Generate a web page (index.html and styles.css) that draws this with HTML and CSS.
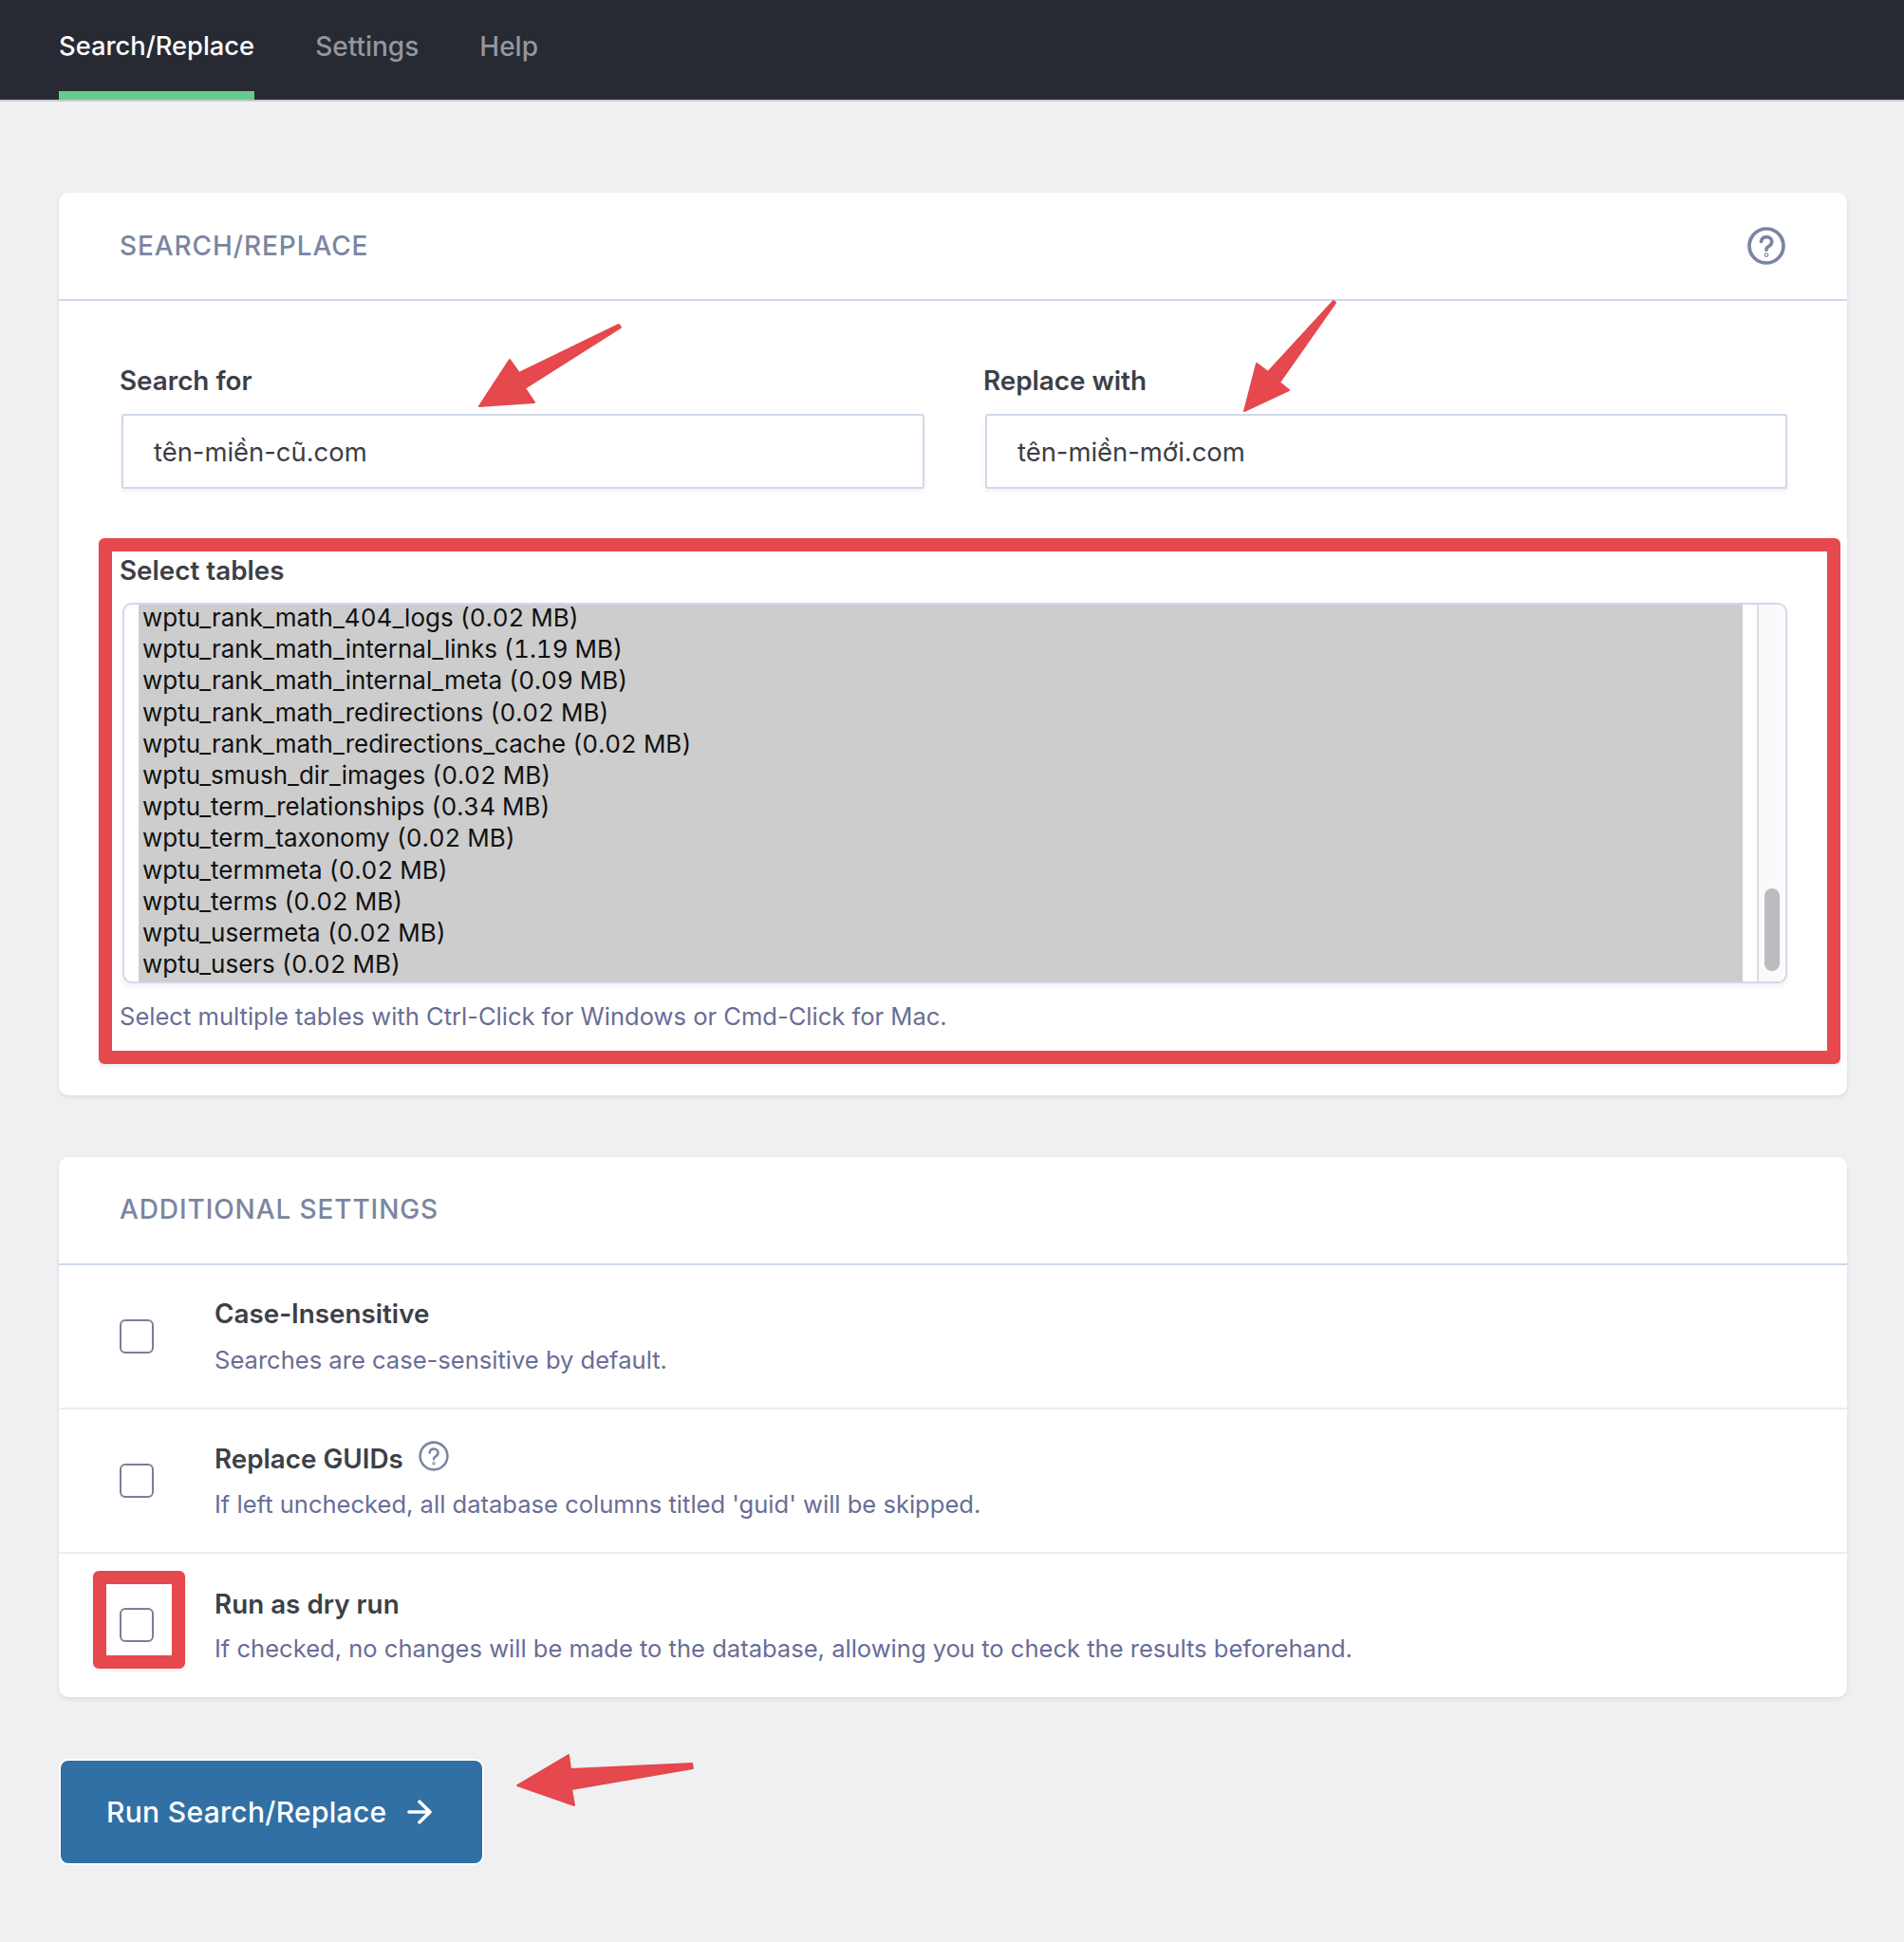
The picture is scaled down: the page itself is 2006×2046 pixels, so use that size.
FILE: index.html
```html
<!DOCTYPE html>
<html lang="vi">
<head>
<meta charset="utf-8">
<title>Search/Replace</title>
<link rel="stylesheet" href="styles.css">
</head>
<body>
<div class="page">
  <nav class="nav">
    <a class="tab active">Search/Replace</a>
    <a class="tab">Settings</a>
    <a class="tab">Help</a>
  </nav>
  <main class="main">
    <section class="card">
      <header class="card-head">
        <h2>SEARCH/REPLACE</h2>
        <svg class="help-lg" viewBox="0 0 40 40" fill="none"><circle cx="20" cy="20" r="18"/><path d="M14.500 15.500c.6-3 2.800-4.800 5.600-4.800 3.400 0 5.600 2.200 5.600 5 0 2.400-1.300 3.700-3.200 4.800-1.700 1-2.500 2-2.500 3.700"/><circle cx="20" cy="29.600" r=".6"/></svg>
      </header>
      <div class="card-body">
        <div class="fields">
          <div class="field">
            <label class="label">Search for</label>
            <div class="input">tên-miền-cũ.com</div>
          </div>
          <div class="field">
            <label class="label">Replace with</label>
            <div class="input">tên-miền-mới.com</div>
          </div>
        </div>
        <label class="label tables-label">Select tables</label>
        <div class="listbox">
          <div class="options">
            <div>wptu_rank_math_404_logs (0.02 MB)</div>
            <div>wptu_rank_math_internal_links (1.19 MB)</div>
            <div>wptu_rank_math_internal_meta (0.09 MB)</div>
            <div>wptu_rank_math_redirections (0.02 MB)</div>
            <div>wptu_rank_math_redirections_cache (0.02 MB)</div>
            <div>wptu_smush_dir_images (0.02 MB)</div>
            <div>wptu_term_relationships (0.34 MB)</div>
            <div>wptu_term_taxonomy (0.02 MB)</div>
            <div>wptu_termmeta (0.02 MB)</div>
            <div>wptu_terms (0.02 MB)</div>
            <div>wptu_usermeta (0.02 MB)</div>
            <div>wptu_users (0.02 MB)</div>
          </div>
          <div class="scroll-gap"></div>
          <div class="scrollbar"><div class="thumb"></div></div>
        </div>
        <p class="hint">Select multiple tables with Ctrl-Click for Windows or Cmd-Click for Mac.</p>
      </div>
    </section>

    <section class="card second">
      <header class="card-head">
        <h2>ADDITIONAL SETTINGS</h2>
      </header>
      <div class="row">
        <span class="check"></span>
        <div class="row-text">
          <div class="row-title">Case-Insensitive</div>
          <div class="row-desc">Searches are case-sensitive by default.</div>
        </div>
      </div>
      <div class="row low">
        <span class="check"></span>
        <div class="row-text">
          <div class="row-title">Replace GUIDs
            <svg class="help-sm" viewBox="0 0 40 40" fill="none"><circle cx="20" cy="20" r="18"/><path d="M14.500 15.500c.6-3 2.800-4.800 5.600-4.800 3.400 0 5.600 2.200 5.600 5 0 2.400-1.300 3.700-3.200 4.800-1.700 1-2.500 2-2.500 3.700"/><circle cx="20" cy="29.600" r=".6"/></svg>
          </div>
          <div class="row-desc">If left unchecked, all database columns titled 'guid' will be skipped.</div>
        </div>
      </div>
      <div class="row low last">
        <span class="check"></span>
        <div class="row-text">
          <div class="row-title">Run as dry run</div>
          <div class="row-desc">If checked, no changes will be made to the database, allowing you to check the results beforehand.</div>
        </div>
      </div>
    </section>

    <button class="run" type="button">Run Search/Replace
      <svg class="run-arrow" viewBox="0 0 26 26" fill="none"><path d="M2 13H24M13 2.200L24 13 13 23.800"/></svg>
    </button>
  </main>

  <div class="mark mark-tables"></div>
  <div class="mark mark-dry"></div>
  <svg class="arrows" viewBox="0 0 2006 2046" width="2006" height="2046">
    <polygon points="505,428 537,379 547,393 652,342 654,345 553,409 563,424"/>
    <polygon points="1311,433 1324,383 1336,392 1405,317 1407,319 1348,403 1358,411"/>
    <polygon points="545,1881 599,1849 601,1864 729,1858 730,1863 602,1885 605,1902"/>
  </svg>
</div>
</body>
</html>
```

FILE: styles.css
```css
* { box-sizing: border-box; }
html, body { margin: 0; padding: 0; }
body {
  background: #f0f0f2;
  font-family: Inter, "Liberation Sans", sans-serif;
  color: #3c4048;
}
.page { position: relative; width: 2006px; height: 2046px; overflow: hidden; }

.nav {
  display: flex;
  gap: 64px;
  height: 107px;
  padding: 0 0 0 62px;
  background: #272a33;
  border-bottom: 2px solid #c8c9cc;
}
.tab {
  height: 105px;
  padding-top: 30px;
  font-size: 28px;
  line-height: 38px;
  font-weight: 500;
  color: #94979e;
}
.tab.active { font-size: 27.3px; color: #fff; border-bottom: 9px solid #68cb8e; }

.main { padding: 96px 60px 0 62px; }

.card {
  background: #fff;
  border-radius: 10px;
  box-shadow: 0 2px 4px rgba(50, 60, 90, .1);
}
.second { margin-top: 65px; }
.second .card-head { padding-bottom: 2px; }
.card-head {
  display: flex;
  align-items: center;
  justify-content: space-between;
  height: 114px;
  padding: 0 64px;
  border-bottom: 2px solid #cfd9ea;
}
.card-head h2 {
  margin: 0;
  font-size: 28px;
  line-height: 36px;
  font-weight: 500;
  letter-spacing: .9px;
  color: #7a86a1;
}
.help-lg { width: 40px; height: 40px; stroke: #7a86a1; stroke-width: 3.7; stroke-linecap: round; margin-right: 1px; }
.help-sm { width: 32px; height: 32px; stroke: #7a86a1; stroke-width: 3.2; stroke-linecap: round; margin-left: 9px; position: relative; top: -6px; vertical-align: middle; }

.card-body { padding: 66px 61px 65px 64px; }
.fields { display: grid; grid-template-columns: 850px 849px; column-gap: 60px; }
.label {
  display: block;
  font-size: 27.8px;
  line-height: 36px;
  font-weight: 600;
  color: #3c4048;
}
.input {
  height: 79px;
  margin: 17px 2px 0;
  padding: 0 32px;
  border: 2px solid #cfd9ea;
  border-radius: 3px;
  background: #fff;
  box-shadow: 0 3px 5px rgba(50, 60, 90, .07);
  font-size: 27.4px;
  line-height: 77px;
  color: #3a3d44;
}
.tables-label { margin-top: 68px; }
.listbox {
  display: flex;
  height: 401px;
  margin: 16px 0 0 3px;
  width: 1754px;
  border: 2px solid #cfd9ea;
  border-radius: 10px;
  box-shadow: 0 3px 5px rgba(50, 60, 90, .07);
  background: #fff;
  overflow: hidden;
}
.options {
  width: 1690px;
  margin-left: 15px;
  padding: 0 4px;
  background: #cdcdcd;
  font-size: 26px;
  font-variant-numeric: tabular-nums;
  line-height: 33.2px;
  color: #111;
  white-space: nowrap;
}
.options > :first-child { margin-top: -3px; }
.scroll-gap { width: 15px; }
.scrollbar {
  position: relative;
  width: 28px;
  background: #fafafa;
  border-left: 2px solid #dcdcdc;
}
.thumb {
  position: absolute;
  left: 6px;
  top: 299px;
  width: 16px;
  height: 87px;
  border-radius: 8px;
  background: #bbbbc0;
}
.hint {
  margin: 17px 0 0;
  font-size: 25.55px;
  line-height: 36px;
  color: #696d96;
}

.row {
  display: flex;
  align-items: center;
  height: 152px;
  padding-left: 64px;
  border-bottom: 2px solid #ebecef;
}
.row.last { height: 151px; border-bottom: 0; }
.row.last .check { margin-bottom: 2px; }
.check {
  flex: none;
  width: 36px;
  height: 36px;
  border: 2px solid #7a8095;
  border-radius: 6px;
  background: #fff;
}
.row-text { margin-left: 64px; }
.row-title {
  font-size: 27.8px;
  line-height: 36px;
  font-weight: 600;
  color: #3c4048;
}
.row-desc {
  margin-top: 13px;
  font-size: 25.55px;
  line-height: 36px;
  color: #696d96;
}
.row.low .row-title { margin-top: 2px; }
.row.low .row-desc { margin-top: 11px; }

.run {
  display: flex;
  align-items: center;
  gap: 22px;
  width: 448px;
  height: 112px;
  margin-top: 65px;
  padding: 0 0 0 48px;
  border: 2px solid #fff;
  border-radius: 10px;
  background: #3170a5;
  color: #fff;
  font-family: inherit;
  font-size: 30px;
  font-weight: 500;
  letter-spacing: .3px;
}
.run-arrow { width: 26px; height: 26px; stroke: #fff; stroke-width: 3.6; stroke-linecap: round; stroke-linejoin: round; }

.mark { position: absolute; border: 14px solid #e5484d; border-radius: 6px; box-shadow: 0 2px 4px rgba(0,0,0,.08); }
.mark-tables { left: 104px; top: 567px; width: 1835px; height: 554px; }
.mark-dry { left: 98px; top: 1655px; width: 97px; height: 103px; }
.arrows { position: absolute; left: 0; top: 0; pointer-events: none; }
.arrows polygon { fill: #e5484d; stroke: #e5484d; stroke-width: 2; stroke-linejoin: round; }
```
